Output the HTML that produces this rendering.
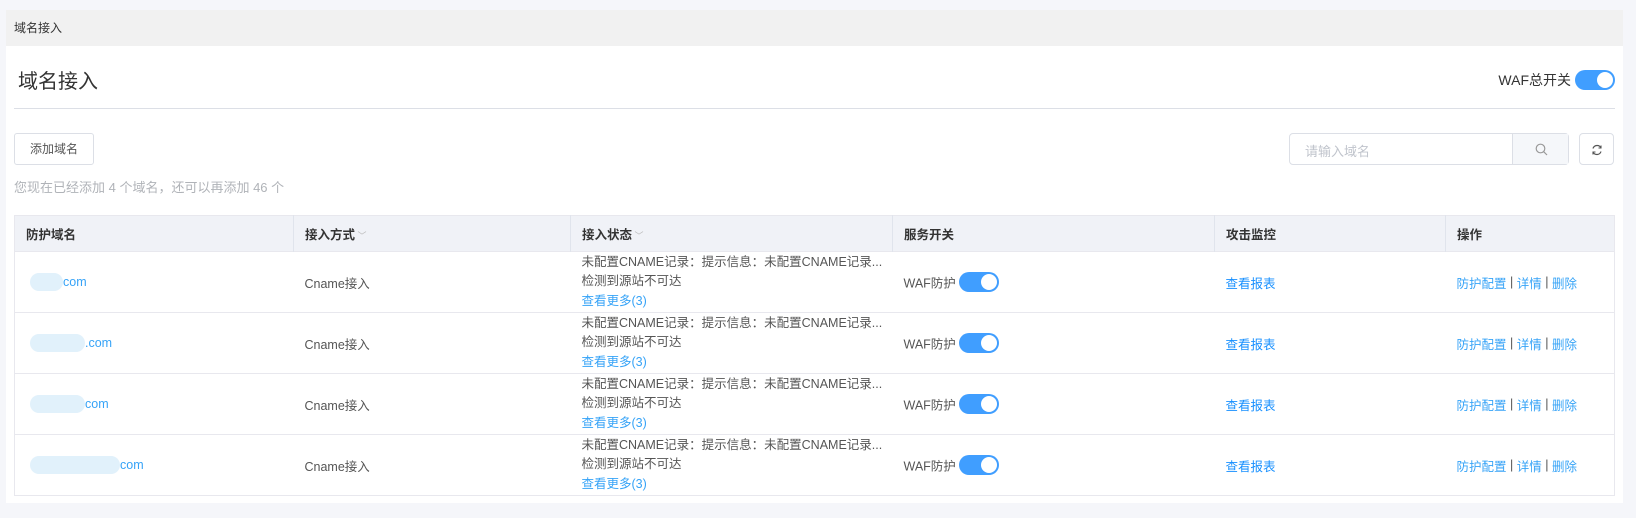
<!DOCTYPE html>
<html><head><meta charset="utf-8"><style>
*{box-sizing:border-box;margin:0;padding:0}
body{width:1636px;height:518px;background:#f5f6fa;font-family:"Liberation Sans","Noto Sans CJK SC",sans-serif;font-size:13px;color:#555;position:relative;overflow:hidden}
.panel{position:absolute;left:6px;top:10px;width:1617px;height:493px;background:#fff}
.bar{position:absolute;left:0;top:0;width:100%;height:36px;background:#f1f1f1;font-size:12px;color:#333;line-height:36px;padding-left:8px}
.abs{position:absolute}
.tg{position:absolute;width:40px;height:20px;border-radius:10px;background:#409eff}
.tg:after{content:"";position:absolute;right:2px;top:2px;width:16px;height:16px;border-radius:50%;background:#fff}
table{position:absolute;left:8px;top:205px;width:1601px;border-collapse:collapse;border:1px solid #e8e8ee}
th{background:#f0f2f7;height:36px;text-align:left;font-weight:bold;color:#333;padding-left:11px;border-left:1px solid #e0e4ec;font-size:12.5px}
td{height:61px;border-top:1px solid #e8e8ee;padding-left:11px;vertical-align:middle;font-size:12.5px}
.st{line-height:19.5px}
a{color:#36a3f7;text-decoration:none;vertical-align:middle}
.rep{color:#1890ff}
.blur{display:inline-block;height:18px;background:#e1f1fb;border-radius:9px;vertical-align:middle}
.arr{color:#bbb;font-size:9px;font-weight:normal}
.w{vertical-align:middle}
</style></head><body>
<div class="panel">
<div class="bar">域名接入</div>
<div class="abs" style="left:12px;top:55px;font-size:20px;color:#333">域名接入</div>
<div class="abs" style="right:52px;top:60px;font-size:14px;color:#333">WAF总开关</div>
<div class="tg" style="left:1569px;top:60px"></div>
<div class="abs" style="left:8px;top:98px;width:1601px;height:1px;background:#dcdfe6"></div>
<div class="abs" style="left:8px;top:123px;width:80px;height:32px;border:1px solid #dcdfe6;border-radius:3px;text-align:center;line-height:30px;font-size:12px;color:#555">添加域名</div>
<div class="abs" style="left:8px;top:167px;color:#b0b3b8;font-size:13px">您现在已经添加 4 个域名，还可以再添加 46 个</div>
<div class="abs" style="left:1283px;top:123px;width:280px;height:32px;border:1px solid #dcdfe6;border-radius:4px">
<span class="abs" style="left:15px;top:7px;color:#c0c4cc;font-size:13px">请输入域名</span>
<div class="abs" style="right:0;top:0;width:56px;height:30px;background:#f5f7fa;border-left:1px solid #dcdfe6">
<svg class="abs" style="left:22px;top:9px" width="13" height="13" viewBox="0 0 13 13"><circle cx="5.5" cy="5.5" r="4.3" fill="none" stroke="#999" stroke-width="1.2"/><path d="M8.7 8.7L12 12" stroke="#999" stroke-width="1.2"/></svg></div></div>
<div class="abs" style="left:1573px;top:123px;width:35px;height:32px;border:1px solid #dcdfe6;border-radius:4px">
<svg class="abs" style="left:11px;top:10px" width="12" height="12" viewBox="0 0 12 12"><path d="M10 4A4.3 4.3 0 0 0 2 4.5M2 8A4.3 4.3 0 0 0 10 7.5" fill="none" stroke="#555" stroke-width="1.2"/><path d="M10 1.5V4H7.5M2 10.5V8H4.5" fill="none" stroke="#555" stroke-width="1.1"/></svg></div>
<table>
<tr><th style="width:279px;border-left:none">防护域名</th><th style="width:277px">接入方式<span class="arr"> ﹀</span></th><th style="width:322px">接入状态<span class="arr"> ﹀</span></th><th style="width:322px">服务开关</th><th style="width:231px">攻击监控</th><th>操作</th></tr>
<tr><td><span class="blur" style="width:33px;margin-left:4px"></span><a>com</a></td><td>Cname接入</td><td class="st">未配置CNAME记录：提示信息：未配置CNAME记录...<br>检测到源站不可达<br><a>查看更多(3)</a></td><td><span class="w">WAF防护</span> <span class="tg" style="position:relative;display:inline-block;vertical-align:middle"></span></td><td><a class="rep">查看报表</a></td><td><a>防护配置</a> | <a>详情</a> | <a>删除</a></td></tr>
<tr><td><span class="blur" style="width:55px;margin-left:4px"></span><a>.com</a></td><td>Cname接入</td><td class="st">未配置CNAME记录：提示信息：未配置CNAME记录...<br>检测到源站不可达<br><a>查看更多(3)</a></td><td><span class="w">WAF防护</span> <span class="tg" style="position:relative;display:inline-block;vertical-align:middle"></span></td><td><a class="rep">查看报表</a></td><td><a>防护配置</a> | <a>详情</a> | <a>删除</a></td></tr>
<tr><td><span class="blur" style="width:55px;margin-left:4px"></span><a>com</a></td><td>Cname接入</td><td class="st">未配置CNAME记录：提示信息：未配置CNAME记录...<br>检测到源站不可达<br><a>查看更多(3)</a></td><td><span class="w">WAF防护</span> <span class="tg" style="position:relative;display:inline-block;vertical-align:middle"></span></td><td><a class="rep">查看报表</a></td><td><a>防护配置</a> | <a>详情</a> | <a>删除</a></td></tr>
<tr><td><span class="blur" style="width:90px;margin-left:4px"></span><a>com</a></td><td>Cname接入</td><td class="st">未配置CNAME记录：提示信息：未配置CNAME记录...<br>检测到源站不可达<br><a>查看更多(3)</a></td><td><span class="w">WAF防护</span> <span class="tg" style="position:relative;display:inline-block;vertical-align:middle"></span></td><td><a class="rep">查看报表</a></td><td><a>防护配置</a> | <a>详情</a> | <a>删除</a></td></tr>
</table>
</div>
</body></html>
